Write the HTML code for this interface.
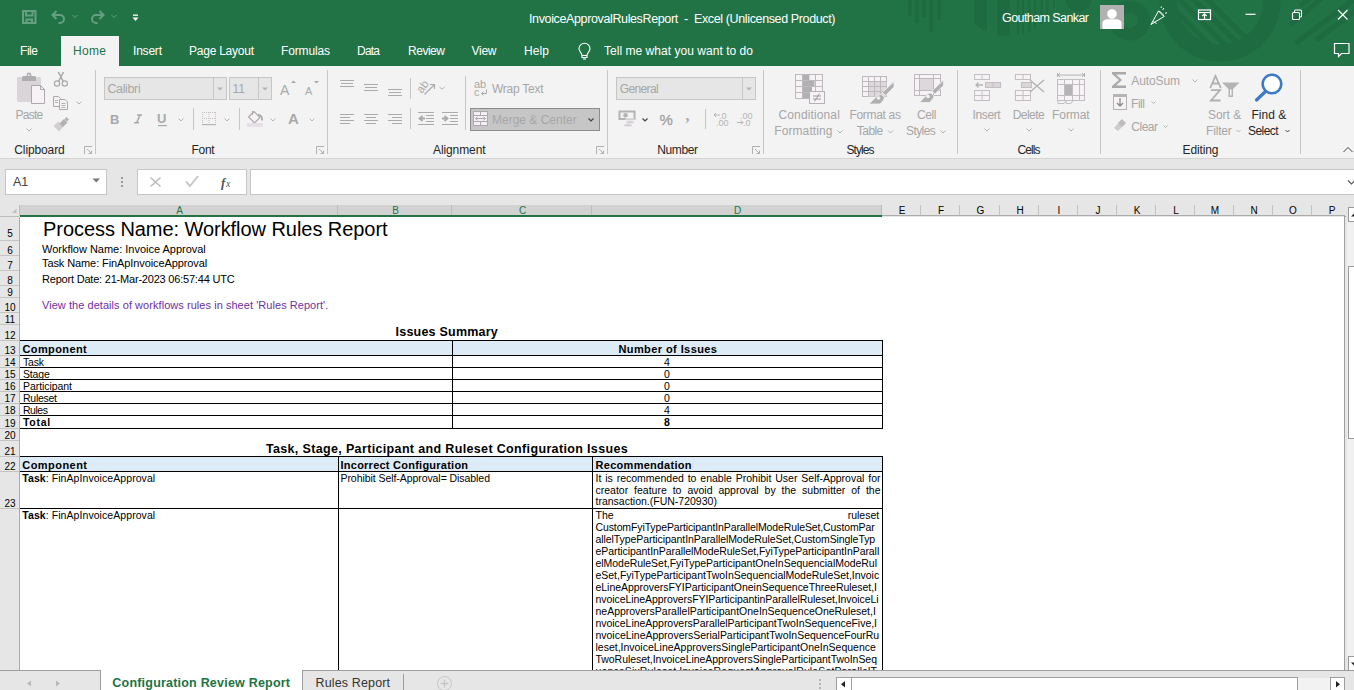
<!DOCTYPE html>
<html><head><meta charset="utf-8">
<style>
*{margin:0;padding:0;box-sizing:border-box}
html,body{width:1354px;height:690px;overflow:hidden;background:#fff;font-family:"Liberation Sans",sans-serif}
.a{position:absolute;white-space:nowrap}
#title{position:absolute;left:0;top:0;width:1354px;height:66px;background:#217346;overflow:hidden}
.tt{color:#fff;font-size:12.5px}
#ribbon{position:absolute;left:0;top:66px;width:1354px;height:93px;background:#f3f3f3;border-bottom:1px solid #d4d4d4}
.gl{color:#262626;font-size:12px}
.dis{color:#a6a6a6;font-size:12px}
.sep{position:absolute;width:1px;background:#c6c6c6}
#fbar{position:absolute;left:0;top:159px;width:1354px;height:44px;background:#e6e6e6}
#colh{position:absolute;left:0;top:203px;width:1354px;height:14px;background:#e6e6e6}
#sheet{position:absolute;left:0;top:217px;width:1354px;height:453px;background:#fff;overflow:hidden}
.colsel{top:2px;height:10px;background:#d2d2d2;border-right:1px solid #bdbdbd;color:#217346;font-size:10px;line-height:12px;text-align:center;padding-left:2px}
.colun{top:2px;height:11px;background:#e6e6e6;border-right:1px solid #c0c0c0;border-bottom:1px solid #ababab;color:#000;font-size:10px;line-height:12px;text-align:center;padding-left:2px}
#tabs{position:absolute;left:0;top:670px;width:1354px;height:20px;background:#e6e6e6}
</style></head><body>
<div id="title">
<svg class="a" style="left:0;top:0" width="1354" height="66">
 <defs><clipPath id="cc"><circle cx="1008" cy="-16" r="52"/></clipPath><clipPath id="bc"><circle cx="1220" cy="1" r="44"/></clipPath></defs>
 <g fill="#1e6a41">
  <rect x="908" y="0" width="4" height="15.5"/><rect x="915" y="0" width="3.5" height="23"/><rect x="922" y="0" width="4" height="17"/><rect x="929" y="0" width="4" height="32"/><rect x="937" y="0" width="4" height="20"/>
  <g clip-path="url(#cc)">
   <path d="M956 0l7 12.5V40h-7z"/>
   <rect x="974" y="0" width="13" height="40"/><rect x="997" y="0" width="13" height="40"/>
   <rect x="1017" y="0" width="2" height="40"/><rect x="1022" y="0" width="2" height="40"/><rect x="1028" y="0" width="2.3" height="40"/><rect x="1034" y="0" width="2" height="40"/><rect x="1040.5" y="0" width="2.3" height="40"/><rect x="1046.5" y="0" width="2" height="40"/><rect x="1053" y="0" width="2" height="40"/>
  </g>
  <circle cx="1078.5" cy="-1.5" r="13.2"/>
 </g>
 <circle cx="1130" cy="20.5" r="13.8" fill="none" stroke="#1e6a41" stroke-width="12.5"/>
 <circle cx="1220" cy="1" r="52" fill="none" stroke="#1e6a41" stroke-width="17"/>
 <g stroke="#1e6a41" stroke-width="5" clip-path="url(#bc)">
  <line x1="1160" y1="-5" x2="1215" y2="50"/><line x1="1170" y1="-10" x2="1230" y2="50"/><line x1="1180" y1="-14" x2="1244" y2="50"/><line x1="1192" y1="-16" x2="1258" y2="50"/>
 </g>
 <g stroke="#1e6a41" stroke-width="5">
  <line x1="1296" y1="43" x2="1360" y2="-5"/><line x1="1316" y1="40" x2="1362" y2="6"/><line x1="1290" y1="25" x2="1322" y2="-2"/><line x1="1300" y1="6" x2="1310" y2="-2"/>
 </g>
 <!-- save -->
 <g fill="none" stroke="#64a081" stroke-width="2">
  <path d="M23 11h12.5v12H23z"/><path d="M26 11v4.5h6.5V11"/><path d="M26.5 23v-3.5h5.5V23"/>
 </g>
 <g fill="none" stroke="#64a081" stroke-width="2">
  <path d="M52.5 15h7.5a4 4 0 0 1 0 8h-1.5"/><path d="M56.5 11l-4 4 4 4"/>
  <path d="M103.5 15h-7.5a4 4 0 0 0 0 8h1.5"/><path d="M99.5 11l4 4-4 4"/>
 </g>
 <g fill="none" stroke="#64a081" stroke-width="1"><path d="M72.5 15l2.5 2.5 2.5-2.5"/><path d="M111.5 15l2.5 2.5 2.5-2.5"/></g>
 <rect x="133" y="14.5" width="5" height="1.3" fill="#fff"/>
 <path d="M132.5 17.5h6l-3 3.5z" fill="#fff"/>
 <!-- avatar -->
 <rect x="1100" y="5" width="24" height="24" fill="#b1b1b1"/>
 <circle cx="1112" cy="14" r="4.8" fill="#fff"/>
 <path d="M1102.5 29v-5.5c0-3 2.5-4.3 5.5-4.3h8c3 0 5.5 1.3 5.5 4.3V29z" fill="#fff"/>
 <!-- celebrate -->
 <g fill="none" stroke="#fff" stroke-width="1">
  <path d="M1151 24.5l7.5-13.5 5.5 5.5z"/><path d="M1158.5 11c1.5 0 5.5 4 5.5 5.5"/><path d="M1153.5 21.5l3 2"/><path d="M1162.5 10l1.5-2M1165 13.5l2-1M1161 8l.5-1.5"/>
 </g>
 <!-- share -->
 <g fill="none" stroke="#fff" stroke-width="1.2">
  <rect x="1198.5" y="10" width="12" height="9.5"/><path d="M1198.5 12.5h12"/><path d="M1204.5 19.5v-5.5M1202.3 16l2.2-2.2 2.2 2.2"/>
 </g>
 <rect x="1245.5" y="13.7" width="10" height="1.2" fill="#fff"/>
 <g fill="none" stroke="#fff" stroke-width="1.1">
  <rect x="1292.5" y="12.5" width="7" height="7" rx="1"/><path d="M1294.5 12.5v-1.5a1 1 0 0 1 1-1h5a1 1 0 0 1 1 1v5a1 1 0 0 1-1 1h-1"/>
  <path d="M1338 10l9.5 9.5M1347.5 10l-9.5 9.5"/>
  <path d="M1334.5 43.5h14.5v10h-7.5l-3 3v-3h-4z" stroke-width="1.2"/>
 </g>
</svg>
<div class="a tt" style="left:529px;top:12px;font-size:12.5px;letter-spacing:-0.370px;">InvoiceApprovalRulesReport&nbsp; - &nbsp;Excel (Unlicensed Product)</div>
<div class="a tt" style="left:1002px;top:11px;font-size:12.5px;letter-spacing:-0.577px;">Goutham Sankar</div>
<div class="a" style="left:61px;top:36px;width:58px;height:30px;background:#f3f3f3"></div>
<div class="a tt" style="left:20px;top:44px;font-size:12px;letter-spacing:-0.448px;">File</div>
<div class="a tt" style="left:73px;top:44px;font-size:12px;color:#217346;letter-spacing:0.328px;">Home</div>
<div class="a tt" style="left:133px;top:44px;font-size:12px;letter-spacing:-0.203px;">Insert</div>
<div class="a tt" style="left:189px;top:44px;font-size:12px;letter-spacing:-0.239px;">Page Layout</div>
<div class="a tt" style="left:281px;top:44px;font-size:12px;letter-spacing:-0.145px;">Formulas</div>
<div class="a tt" style="left:357px;top:44px;font-size:12px;letter-spacing:-0.786px;">Data</div>
<div class="a tt" style="left:408px;top:44px;font-size:12px;letter-spacing:-0.472px;">Review</div>
<div class="a tt" style="left:471.6px;top:44px;font-size:12px;letter-spacing:-0.299px;">View</div>
<div class="a tt" style="left:524px;top:44px;font-size:12px;letter-spacing:0.104px;">Help</div>
<svg class="a" style="left:576px;top:41px" width="18" height="20"><g fill="none" stroke="#fff" stroke-width="1.1"><path d="M6 14.5c0-2.5-3-3.8-3-6.7a5.5 5.5 0 0 1 11 0c0 2.9-3 4.2-3 6.7z"/><path d="M6 14.5v2h5v-2"/><path d="M7 18h3"/></g></svg>
<div class="a tt" style="left:604px;top:44px;font-size:12px;letter-spacing:0.035px;">Tell me what you want to do</div>
</div>
<div id="ribbon">
<svg class="a" style="left:0;top:0" width="1354" height="92">
 <g fill="#c6c6c6">
  <rect x="95" y="4" width="1" height="84"/><rect x="327" y="4" width="1" height="84"/><rect x="607" y="4" width="1" height="84"/>
  <rect x="763" y="4" width="1" height="84"/><rect x="957" y="4" width="1" height="84"/><rect x="1100" y="4" width="1" height="84"/><rect x="1300" y="4" width="1" height="84"/>
  <rect x="193" y="42" width="1" height="22"/><rect x="239" y="42" width="1" height="22"/>
  <rect x="410" y="12" width="1" height="21"/><rect x="410" y="42" width="1" height="21"/><rect x="465" y="10" width="1" height="54"/>
  <rect x="705" y="43" width="1" height="20"/>
 </g>
 <!-- dialog launchers -->
 <g fill="none" stroke="#b0b0b0" stroke-width="1">
  <path d="M84.5 88v-7.5h7.5M87 83l4.5 4.5M91.5 84.5v3h-3"/>
  <path d="M316.5 88v-7.5h7.5M319 83l4.5 4.5M323.5 84.5v3h-3"/>
  <path d="M596.5 88v-7.5h7.5M599 83l4.5 4.5M603.5 84.5v3h-3"/>
  <path d="M752.5 88v-7.5h7.5M755 83l4.5 4.5M759.5 84.5v3h-3"/>
 </g>
 <!-- Paste -->
 <rect x="17" y="11" width="24" height="25" rx="1.5" fill="#d9d5d9"/>
 <path d="M22 15v-3.5a1.5 1.5 0 0 1 1.5-1.5h3.2v-1.2a2.3 2.3 0 0 1 4.6 0V10h3.2a1.5 1.5 0 0 1 1.5 1.5V15z" fill="#b0adb0"/><circle cx="28.8" cy="9.2" r="0.9" fill="#f3f3f3"/>
 <path d="M31.5 19.5h9l4 4v14h-13z" fill="#f6f2f6" stroke="#aca9ac"/><path d="M40.5 19.5v4h4" fill="none" stroke="#aca9ac"/>
 <!-- scissors -->
 <g fill="none" stroke="#aaa" stroke-width="1.2"><circle cx="57" cy="17.5" r="2.6"/><circle cx="64.8" cy="17.5" r="2.6"/></g>
 <path d="M58.5 15.5L63.5 6M63.3 15.5L58.3 6" stroke="#aaa" stroke-width="1.6"/>
 <!-- copy -->
 <g fill="#f6f2f6" stroke="#aaa" stroke-width="1"><path d="M53.5 30.5h5l2 2v8h-7z"/><path d="M59.5 33.5h5.5l2.5 2.5v7.5h-8z"/></g>
 <g stroke="#aaa" stroke-width="0.9"><path d="M61.5 37.5h4M61.5 39.5h4M61.5 41.5h4M55 34.5h3M55 36.5h3"/></g>
 <!-- brush -->
 <g transform="translate(0 2.5)"><path d="M53.5 57.5l5-4.5 5 5-4.5 5z" fill="#d2ced2"/><path d="M59.5 55l4.5-4.5 3.5 3.5-4.5 4.5z" fill="#b4b1b4"/><path d="M64.5 50.5l2-2 2.5 2.5-2 2z" fill="#b4b1b4"/></g>
 <g fill="none" stroke="#b4b4b4" stroke-width="1"><path d="M76.5 35.5l2.5 2.5 2.5-2.5M26.5 62.5l2.5 2.5 2.5-2.5"/></g>
 <!-- Font combos -->
 <rect x="104.5" y="11.5" width="122" height="22" fill="#e6e6e6" stroke="#c6c6c6"/><rect x="213" y="12" width="1" height="21" fill="#c6c6c6"/>
 <rect x="229.5" y="11.5" width="42" height="22" fill="#e6e6e6" stroke="#c6c6c6"/><rect x="258" y="12" width="1" height="21" fill="#c6c6c6"/>
 <path d="M217 21.5h6l-3 3z M262 21.5h6l-3 3z" fill="#b4b4b4"/>
 <rect x="616.5" y="11.5" width="139" height="22" fill="#e6e6e6" stroke="#c6c6c6"/><rect x="742" y="12" width="1" height="21" fill="#c6c6c6"/><path d="M746 21.5h6l-3 3z" fill="#b4b4b4"/>
 <!-- grow/shrink -->
 <text x="280" y="29" font-family="Liberation Sans" font-size="14" fill="#a9a9a9">A</text>
 <path d="M291 17l2.5-2.5 2.5 2.5z" fill="#a9a9a9"/>
 <text x="305" y="29" font-family="Liberation Sans" font-size="11" fill="#a9a9a9">A</text>
 <path d="M314 15h5l-2.5 2.5z" fill="#a9a9a9"/>
 <!-- B I U -->
 <text x="110" y="58" font-family="Liberation Sans" font-weight="bold" font-size="13" fill="#a9a9a9">B</text>
 <path d="M137 49h5M134 56.8h5M140 49l-3.3 7.8" fill="none" stroke="#a9a9a9" stroke-width="1.6"/>
 <text x="157" y="57" font-family="Liberation Sans" font-weight="bold" font-size="13" fill="#a9a9a9">U</text>
 <rect x="158" y="59" width="9" height="1.2" fill="#a9a9a9"/>
 <g fill="none" stroke="#b4b4b4" stroke-width="1"><path d="M178.5 52.5l2.5 2.5 2.5-2.5M224.5 52.5l2.5 2.5 2.5-2.5M270.5 52.5l2.5 2.5 2.5-2.5M309.5 52.5l2.5 2.5 2.5-2.5M439.5 21l2.5 2.2 2.5-2.2"/></g>
 <!-- borders icon -->
 <g fill="none" stroke="#c4bcc4" stroke-width="1" stroke-dasharray="1 1"><path d="M202 46.5h14M202 52.5h14M202.5 46v12M209 46v12M215.5 46v12"/></g>
 <rect x="202" y="58" width="14" height="1.2" fill="#b4b4b4"/>
 <!-- fill -->
 <path d="M248.5 51l5.5-5.5 6 6-5.5 5.5z" fill="#f6f2f6" stroke="#aaa" stroke-width="1.1"/><path d="M252.5 45v4" stroke="#aaa" stroke-width="1.1"/>
 <path d="M258 49c3 0 4.5 2 4 5.5" fill="none" stroke="#aaa" stroke-width="1.8"/>
 <rect x="247" y="57" width="16" height="4" fill="#e6dfe6"/>
 <text x="288" y="58" font-family="Liberation Sans" font-weight="bold" font-size="15" fill="#a9a9a9">A</text>
 <!-- alignment icons -->
 <g stroke="#aaa" stroke-width="1">
  <path d="M340 14.5h14M341 17.5h12M340 20.5h14"/>
  <path d="M364 18.5h14M365 21.5h12M364 24.5h14"/>
  <path d="M388 23.5h14M389 26.5h12M388 29.5h14"/>
  <path d="M340 48.5h14M340 51.5h10M340 54.5h14M340 57.5h10"/>
  <path d="M364 48.5h14M366 51.5h10M364 54.5h14M366 57.5h10"/>
  <path d="M388 48.5h14M392 51.5h10M388 54.5h14M392 57.5h10"/>
  <path d="M418 46.5h16M426 49.5h8M426 52.5h8M426 55.5h8M418 58.5h16"/>
  <path d="M442 46.5h16M450 49.5h8M450 52.5h8M450 55.5h8M442 58.5h16"/>
 </g>
 <path d="M425 52.5h-4.5M422.5 49.8l-3 2.7 3 2.7" fill="none" stroke="#aaa" stroke-width="1.8"/>
 <path d="M442 52.5h4.5M444.5 49.8l3 2.7-3 2.7" fill="none" stroke="#aaa" stroke-width="1.8"/>
 <text x="416" y="24.5" font-family="Liberation Sans" font-size="11.5" fill="#aaa" transform="rotate(-55 422.5 20.5)">ab</text>
 <path d="M424.5 28.5l9.5-9.5M430 18.5h4.5v4.5" fill="none" stroke="#aaa" stroke-width="1.2"/>
 <text x="474" y="22" font-family="Liberation Sans" font-size="11" fill="#a9a9a9">ab</text>
 <text x="474" y="29.5" font-family="Liberation Sans" font-size="11" fill="#a9a9a9">c</text>
 <path d="M486.5 23.5v4h-5M483.5 25.5l-2 2 2 2" fill="none" stroke="#a9a9a9" stroke-width="1"/>
 <!-- Merge & Center -->
 <rect x="470.5" y="42.5" width="129" height="22" fill="#c6c6c6" stroke="#8c8c8c"/>
 <rect x="473.5" y="45.5" width="14" height="14" fill="#f6eef6" stroke="#aaa"/>
 <path d="M473.5 49.5h14M473.5 55.5h14M480.5 45.5v4M480.5 55.5v4M475.5 52.5h10M477.5 50.8l-2 1.7 2 1.7M483.5 50.8l2 1.7-2 1.7" fill="none" stroke="#aaa" stroke-width="1"/>
 <path d="M588.5 52.5l2.5 2.5 2.5-2.5" fill="none" stroke="#444" stroke-width="1.2"/>
 <!-- number icons -->
 <rect x="619.5" y="45.5" width="15" height="7.5" fill="#f3f3f3" stroke="#b4b4b4" stroke-width="2"/><circle cx="625.5" cy="49.2" r="2.3" fill="#b4b4b4"/>
 <ellipse cx="630" cy="53.5" rx="4.2" ry="1.6" fill="#d4ccd4" stroke="#f3f3f3" stroke-width="0.8"/><ellipse cx="630" cy="56.3" rx="4.2" ry="1.6" fill="#d4ccd4" stroke="#f3f3f3" stroke-width="0.8"/><ellipse cx="628" cy="59.2" rx="4.2" ry="1.6" fill="#d4ccd4" stroke="#f3f3f3" stroke-width="0.8"/>
 <path d="M642.5 52.5l2.5 2.5 2.5-2.5" fill="none" stroke="#444" stroke-width="1.2"/>
 <text x="659.5" y="59" font-family="Liberation Sans" font-size="15" fill="#a0a0a0" stroke="#a0a0a0" stroke-width="0.3">%</text>
 <text x="685.5" y="55" font-family="Liberation Serif" font-weight="bold" font-size="16" fill="#a9a9a9">,</text>
 <text x="719" y="53" font-family="Liberation Sans" font-size="9" fill="#b4b4b4">.0</text>
 <text x="716" y="60" font-family="Liberation Sans" font-size="9" fill="#b4b4b4">.00</text>
 <path d="M720 49h-6M716 47l-2 2 2 2" fill="none" stroke="#b4b4b4" stroke-width="1"/>
 <text x="740" y="53" font-family="Liberation Sans" font-size="9" fill="#b4b4b4">.00</text>
 <text x="743" y="60" font-family="Liberation Sans" font-size="9" fill="#b4b4b4">.0</text>
 <path d="M737 56.5h6M741 54.5l2 2-2 2" fill="none" stroke="#b4b4b4" stroke-width="1"/>
 <g fill="none" stroke="#b4b4b4" stroke-width="1"><path d="M837.5 64.5l2.5 2.5 2.5-2.5M888 64.5l2.5 2.5 2.5-2.5M940.5 64.5l2.5 2.5 2.5-2.5"/></g>
 <!-- conditional formatting -->
 <rect x="795.5" y="8.5" width="27" height="24" fill="#f6f2f6" stroke="#bdb9bd"/>
 <path d="M795.5 14.5h27M795.5 20.5h27M795.5 26.5h27M802.5 8.5v24M809 8.5v24M815.5 8.5v24" fill="none" stroke="#bdb9bd"/>
 <rect x="803" y="9" width="6" height="5" fill="#b0b0b0"/><rect x="803" y="15" width="11.5" height="5" fill="#b0b0b0"/><rect x="803" y="21" width="9" height="5" fill="#b0b0b0"/><rect x="803" y="27" width="6" height="5" fill="#b0b0b0"/>
 <rect x="809.5" y="25.5" width="15" height="12" fill="#f6f2f6" stroke="#b4b0b4"/>
 <path d="M813 30h8M813 33h8M819.5 27.5l-5 8" fill="none" stroke="#999" stroke-width="1"/>
 <!-- format as table -->
 <rect x="862.5" y="10.5" width="24" height="20" fill="#f6f2f6" stroke="#bdb9bd"/>
 <rect x="869" y="16" width="17.5" height="14.5" fill="#dcd8dc"/>
 <path d="M862.5 15.5h24M862.5 20.5h24M862.5 25.5h24M868.5 10.5v20M874.5 10.5v20M880.5 10.5v20" fill="none" stroke="#bdb9bd"/>
 <path d="M894 15.5v5.5l-8.5 8.5-3-3z" fill="#b0b0b0" stroke="#f3f3f3" stroke-width="0.8"/>
 <path d="M881.5 28.5l3 3c-.5 2-1.5 3.5-3 5l-1.5 1.5h-11l7-7c1.5-1.5 3.5-2.5 5.5-2.5z" fill="#b0b0b0" stroke="#f3f3f3" stroke-width="0.8"/>
 <circle cx="878.5" cy="32" r="1.8" fill="#f3f3f3"/>
 <!-- cell styles -->
 <rect x="914.5" y="8.5" width="26" height="21" fill="#f6f2f6" stroke="#bdb9bd"/>
 <rect x="920" y="13" width="13.5" height="11" fill="#dcd8dc"/>
 <path d="M914.5 12.5h26M914.5 24.5h26M919.5 8.5v21M933.5 8.5v21" fill="none" stroke="#bdb9bd"/>
 <path d="M943.5 14v5.5l-8.5 8.5-3-3z" fill="#b0b0b0" stroke="#f3f3f3" stroke-width="0.8"/>
 <path d="M931 27l3 3c-.5 2-1.5 3.5-3 5l-1.5 1.5h-10l6.5-7c1.5-1.5 3-2.5 5-2.5z" fill="#b0b0b0" stroke="#f3f3f3" stroke-width="0.8"/>
 <circle cx="928" cy="30.5" r="1.8" fill="#f3f3f3"/>
 <!-- insert -->
 <g fill="#f6f2f6" stroke="#c2bfc2" stroke-width="1">
  <rect x="974.5" y="8.5" width="15" height="5"/><path d="M982 8.5v5"/>
  <rect x="985.5" y="16.5" width="15" height="5" fill="#d9d5d9"/><path d="M993 16.5v5"/>
  <rect x="974.5" y="24.5" width="15" height="10"/><path d="M974.5 29.5h15M982 24.5v10"/>
 </g>
 <path d="M983 19h-7M978.5 16.5L976 19l2.5 2.5" fill="none" stroke="#b4b4b4" stroke-width="1.3"/>
 <!-- delete -->
 <g fill="#f6f2f6" stroke="#c2bfc2" stroke-width="1">
  <rect x="1015.5" y="8.5" width="15" height="5"/><path d="M1023 8.5v5"/>
  <rect x="1021.5" y="16.5" width="10" height="5" fill="#d9d5d9"/>
  <rect x="1015.5" y="24.5" width="15" height="10"/><path d="M1015.5 29.5h15M1023 24.5v10"/>
 </g>
 <path d="M1030 14l14 12M1044 14l-14 12" fill="none" stroke="#b4b4b4" stroke-width="1.5"/>
 <!-- format -->
 <path d="M1057.5 7v4M1084.5 7v4M1058 9h26M1060 7l-2 2 2 2M1082 7l2 2-2 2" fill="none" stroke="#b4b4b4" stroke-width="1"/>
 <rect x="1057.5" y="13.5" width="27" height="21" fill="#f6f2f6" stroke="#c2bfc2"/>
 <path d="M1057.5 18.5h27M1057.5 29.5h27M1064.5 13.5v21M1072.5 13.5v21M1079.5 13.5v21" fill="none" stroke="#c2bfc2"/>
 <rect x="1065" y="19" width="7" height="10" fill="#b4b4b4"/>
 <path d="M1058 34.5v3h6l2-3M1066 34.5v3h5l2-3" fill="none" stroke="#c2bfc2"/>
 <g fill="none" stroke="#b4b4b4" stroke-width="1"><path d="M984.5 62.5l2.5 2.5 2.5-2.5M1026.5 62.5l2.5 2.5 2.5-2.5M1068.5 62.5l2.5 2.5 2.5-2.5"/></g>
 <!-- editing -->
 <path d="M1112 6h14v2.5h-10l6 5.5-6 5.5h10v2.5h-14v-2l7-6-7-6z" fill="#a9a9a9"/>
 <rect x="1113.5" y="28.5" width="13" height="15" fill="#f6f2f6" stroke="#b4b4b4"/><rect x="1113" y="28" width="14" height="3" fill="#b4b4b4"/>
 <path d="M1120 32v8M1117 37l3 3 3-3" fill="none" stroke="#8c8c8c" stroke-width="1.3"/>
 <path d="M1114 62l7-8 4 4-7 7z" fill="#cfcbcf"/><path d="M1118 57l4-4 4 4-4 4z" fill="#bdbdbd"/>
 <g fill="none" stroke="#b4b4b4" stroke-width="1"><path d="M1192.5 13.5l2.5 2.5 2.5-2.5M1151.5 35.5l2 2 2-2M1163.5 59.5l2 2 2-2M1261.5 64l2 2 2-2"/></g>
 <path d="M1210.2 22L1215.5 10l5.3 12M1212 17.5h7" fill="none" stroke="#b0b0b0" stroke-width="1.8"/>
 <path d="M1211 24.2h9l-9 10.3h9.5" fill="none" stroke="#b0b0b0" stroke-width="1.8"/>
 <path d="M1222 16.5h17.5l-6.5 6.5v8h-4.5v-8z" fill="#b4b4b4"/><rect x="1230" y="23.5" width="1.6" height="6" fill="#f3f3f3"/><path d="M1226 20h10l-3 4v7h-2v-7z" fill="#f3f3f3" opacity="0"/>
 <circle cx="1272" cy="18" r="9.3" fill="#fff" stroke="#3c7bc4" stroke-width="2.6"/>
 <path d="M1265.5 25.5l-9 8.5" stroke="#3c7bc4" stroke-width="3.2" stroke-linecap="round"/>
 <path d="M1343.5 86l4.5-4.5 4.5 4.5" fill="none" stroke="#444" stroke-width="1"/><path d="M1236.5 64l2 2 2-2" fill="none" stroke="#b4b4b4" stroke-width="1"/>
 <path d="M1285.5 64l2 2 2-2" fill="none" stroke="#444" stroke-width="1"/>
</svg>
<div class="a dis" style="left:15.4px;top:42.84px;font-size:12px;line-height:12px;letter-spacing:-0.697px;">Paste</div>
<div class="a gl" style="left:14.3px;top:77.84px;font-size:12px;line-height:12px;letter-spacing:-0.122px;">Clipboard</div>
<div class="a dis" style="left:107.4px;top:16.92px;font-size:12.5px;line-height:12.5px;letter-spacing:-0.356px;">Calibri</div>
<div class="a dis" style="left:232.4px;top:16.92px;font-size:12px;line-height:12px;">11</div>
<div class="a gl" style="left:191.6px;top:77.84px;font-size:12px;line-height:12px;letter-spacing:-0.339px;">Font</div>
<div class="a dis" style="left:492px;top:17.34px;font-size:12px;line-height:12px;letter-spacing:-0.260px;">Wrap Text</div>
<div class="a dis" style="left:492px;top:47.84px;font-size:12px;line-height:12px;letter-spacing:-0.000px;">Merge &amp; Center</div>
<div class="a gl" style="left:433px;top:77.84px;font-size:12px;line-height:12px;letter-spacing:-0.097px;">Alignment</div>
<div class="a dis" style="left:619.8px;top:17.34px;font-size:12px;line-height:12px;letter-spacing:-0.651px;">General</div>
<div class="a gl" style="left:657.2px;top:77.84px;font-size:12px;line-height:12px;letter-spacing:-0.378px;">Number</div>
<div class="a dis" style="left:778.5px;top:43.04px;font-size:12px;line-height:12px;letter-spacing:0.125px;">Conditional</div>
<div class="a dis" style="left:774.3px;top:58.74px;font-size:12px;line-height:12px;letter-spacing:0.082px;">Formatting</div>
<div class="a dis" style="left:849.4px;top:43.04px;font-size:12px;line-height:12px;letter-spacing:-0.302px;">Format as</div>
<div class="a dis" style="left:856.8px;top:58.74px;font-size:12px;line-height:12px;letter-spacing:-0.547px;">Table</div>
<div class="a dis" style="left:917px;top:43.04px;font-size:12px;line-height:12px;letter-spacing:-0.391px;">Cell</div>
<div class="a dis" style="left:906px;top:58.74px;font-size:12px;line-height:12px;letter-spacing:-0.577px;">Styles</div>
<div class="a gl" style="left:846.4px;top:77.84px;font-size:12px;line-height:12px;letter-spacing:-0.917px;">Styles</div>
<div class="a dis" style="left:972.5px;top:42.94px;font-size:12px;line-height:12px;letter-spacing:-0.363px;">Insert</div>
<div class="a dis" style="left:1012.7px;top:42.94px;font-size:12px;line-height:12px;letter-spacing:-0.537px;">Delete</div>
<div class="a dis" style="left:1052px;top:42.94px;font-size:12px;line-height:12px;letter-spacing:-0.063px;">Format</div>
<div class="a gl" style="left:1017.5px;top:77.84px;font-size:12px;line-height:12px;letter-spacing:-0.893px;">Cells</div>
<div class="a dis" style="left:1131.3px;top:9.34px;font-size:12px;line-height:12px;letter-spacing:-0.110px;">AutoSum</div>
<div class="a dis" style="left:1131px;top:31.64px;font-size:12px;line-height:12px;letter-spacing:-0.443px;">Fill</div>
<div class="a dis" style="left:1131.3px;top:55.14px;font-size:12px;line-height:12px;letter-spacing:-0.497px;">Clear</div>
<div class="a dis" style="left:1207.9px;top:43.14px;font-size:12px;line-height:12px;letter-spacing:0.008px;">Sort &amp;</div>
<div class="a dis" style="left:1206px;top:58.84px;font-size:12px;line-height:12px;letter-spacing:-0.174px;">Filter</div>
<div class="a gl" style="left:1251.5px;top:43.14px;font-size:12px;line-height:12px;letter-spacing:0.022px;">Find &amp;</div>
<div class="a gl" style="left:1248px;top:58.84px;font-size:12px;line-height:12px;letter-spacing:-0.552px;">Select</div>
<div class="a gl" style="left:1182.6px;top:77.84px;font-size:12px;line-height:12px;letter-spacing:-0.151px;">Editing</div>
</div>
<div id="fbar">
<div class="a" style="left:5px;top:10px;width:102px;height:26px;background:#fff;border:1px solid #c6c6c6"></div>
<div class="a" style="left:13px;top:16px;font-size:12.5px;color:#444">A1</div>
<svg class="a" style="left:0;top:-1px" width="1354" height="45">
 <path d="M92.5 20.5h7.5l-3.75 4z" fill="#777"/>
 <g fill="#9a9a9a"><rect x="121" y="19" width="2" height="2"/><rect x="121" y="23" width="2" height="2"/><rect x="121" y="27" width="2" height="2"/></g>
 <rect x="137.5" y="11.5" width="109" height="25" fill="#fff" stroke="#c6c6c6"/>
 <path d="M150.5 19.5l10 9M160.5 19.5l-10 9" stroke="#b8b8b8" stroke-width="1.4"/>
 <path d="M186 23.5l4 4.5 8-10" fill="none" stroke="#c8c8c8" stroke-width="2"/>
 <text x="221" y="29" font-family="Liberation Serif" font-style="italic" font-weight="bold" font-size="13" fill="#555">f</text>
 <text x="226" y="29" font-family="Liberation Serif" font-style="italic" font-size="10" fill="#555">x</text>
 <rect x="250.5" y="11.5" width="1110" height="25" fill="#fff" stroke="#c6c6c6"/>
 <path d="M1348 22.5l3.5 3.5 3.5-3.5" fill="none" stroke="#555" stroke-width="1.2"/>
</svg>
</div>
<div id="colh">
<div class="a" style="left:0;top:2px;width:19px;height:11px;background:#e6e6e6"></div><svg class="a" style="left:0;top:0" width="20" height="13"><path d="M16.5 10h-4.5l4.5-4.5z" fill="#c0c0c0"/></svg><div class="a" style="left:19px;top:2px;width:1px;height:11px;background:#bdbdbd"></div><div class="a" style="left:0;top:13px;width:19px;height:1px;background:#bdbdbd"></div><div class="a colsel" style="left:20px;width:318px">A</div><div class="a colsel" style="left:338px;width:114px">B</div><div class="a colsel" style="left:452px;width:140px">C</div><div class="a colsel" style="left:592px;width:290px">D</div><div class="a colun" style="left:882px;width:39px">E</div><div class="a colun" style="left:921px;width:39px">F</div><div class="a colun" style="left:960px;width:40px">G</div><div class="a colun" style="left:1000px;width:39px">H</div><div class="a colun" style="left:1039px;width:39px">I</div><div class="a colun" style="left:1078px;width:39px">J</div><div class="a colun" style="left:1117px;width:39px">K</div><div class="a colun" style="left:1156px;width:39px">L</div><div class="a colun" style="left:1195px;width:39px">M</div><div class="a colun" style="left:1234px;width:39px">N</div><div class="a colun" style="left:1273px;width:39px">O</div><div class="a colun" style="left:1312px;width:39px">P</div><div class="a" style="left:20px;top:12px;width:862px;height:2px;background:#217346"></div><div class="a" style="left:1345px;top:0;width:9px;height:14px;background:#e6e6e6"></div><div class="a" style="left:1344px;top:13px;width:2px;height:1px;background:#a0a0a0"></div>
</div>
<div id="sheet">
<div class="a" style="left:0px;top:0px;width:19px;height:453px;background:#e6e6e6"></div>
<div class="a" style="left:19px;top:0px;width:1px;height:453px;background:#ababab"></div>
<div class="a" style="left:0px;top:23px;width:19px;height:1px;background:#c4c4c4"></div>
<div class="a" style="left:0.5px;top:12.13px;font-size:10px;line-height:10px;width:19px;text-align:center;color:#000;">5</div>
<div class="a" style="left:0px;top:38px;width:19px;height:1px;background:#c4c4c4"></div>
<div class="a" style="left:0.5px;top:28.63px;font-size:10px;line-height:10px;width:19px;text-align:center;color:#000;">6</div>
<div class="a" style="left:0px;top:53px;width:19px;height:1px;background:#c4c4c4"></div>
<div class="a" style="left:0.5px;top:43.64px;font-size:10px;line-height:10px;width:19px;text-align:center;color:#000;">7</div>
<div class="a" style="left:0px;top:68px;width:19px;height:1px;background:#c4c4c4"></div>
<div class="a" style="left:0.5px;top:58.64px;font-size:10px;line-height:10px;width:19px;text-align:center;color:#000;">8</div>
<div class="a" style="left:0px;top:80px;width:19px;height:1px;background:#c4c4c4"></div>
<div class="a" style="left:0.5px;top:70.64px;font-size:10px;line-height:10px;width:19px;text-align:center;color:#000;">9</div>
<div class="a" style="left:0px;top:95px;width:19px;height:1px;background:#c4c4c4"></div>
<div class="a" style="left:0.5px;top:85.64px;font-size:10px;line-height:10px;width:19px;text-align:center;color:#000;">10</div>
<div class="a" style="left:0px;top:107px;width:19px;height:1px;background:#c4c4c4"></div>
<div class="a" style="left:0.5px;top:97.64px;font-size:10px;line-height:10px;width:19px;text-align:center;color:#000;">11</div>
<div class="a" style="left:0px;top:123px;width:19px;height:1px;background:#c4c4c4"></div>
<div class="a" style="left:0.5px;top:113.64px;font-size:10px;line-height:10px;width:19px;text-align:center;color:#000;">12</div>
<div class="a" style="left:0px;top:138px;width:19px;height:1px;background:#c4c4c4"></div>
<div class="a" style="left:0.5px;top:128.64px;font-size:10px;line-height:10px;width:19px;text-align:center;color:#000;">13</div>
<div class="a" style="left:0px;top:150px;width:19px;height:1px;background:#c4c4c4"></div>
<div class="a" style="left:0.5px;top:140.64px;font-size:10px;line-height:10px;width:19px;text-align:center;color:#000;">14</div>
<div class="a" style="left:0px;top:162px;width:19px;height:1px;background:#c4c4c4"></div>
<div class="a" style="left:0.5px;top:152.64px;font-size:10px;line-height:10px;width:19px;text-align:center;color:#000;">15</div>
<div class="a" style="left:0px;top:174px;width:19px;height:1px;background:#c4c4c4"></div>
<div class="a" style="left:0.5px;top:164.64px;font-size:10px;line-height:10px;width:19px;text-align:center;color:#000;">16</div>
<div class="a" style="left:0px;top:186px;width:19px;height:1px;background:#c4c4c4"></div>
<div class="a" style="left:0.5px;top:176.64px;font-size:10px;line-height:10px;width:19px;text-align:center;color:#000;">17</div>
<div class="a" style="left:0px;top:198px;width:19px;height:1px;background:#c4c4c4"></div>
<div class="a" style="left:0.5px;top:188.64px;font-size:10px;line-height:10px;width:19px;text-align:center;color:#000;">18</div>
<div class="a" style="left:0px;top:211px;width:19px;height:1px;background:#c4c4c4"></div>
<div class="a" style="left:0.5px;top:201.64px;font-size:10px;line-height:10px;width:19px;text-align:center;color:#000;">19</div>
<div class="a" style="left:0px;top:223px;width:19px;height:1px;background:#c4c4c4"></div>
<div class="a" style="left:0.5px;top:213.64px;font-size:10px;line-height:10px;width:19px;text-align:center;color:#000;">20</div>
<div class="a" style="left:0px;top:239px;width:19px;height:1px;background:#c4c4c4"></div>
<div class="a" style="left:0.5px;top:229.64px;font-size:10px;line-height:10px;width:19px;text-align:center;color:#000;">21</div>
<div class="a" style="left:0px;top:254px;width:19px;height:1px;background:#c4c4c4"></div>
<div class="a" style="left:0.5px;top:244.64px;font-size:10px;line-height:10px;width:19px;text-align:center;color:#000;">22</div>
<div class="a" style="left:0px;top:291px;width:19px;height:1px;background:#c4c4c4"></div>
<div class="a" style="left:0.5px;top:281.64px;font-size:10px;line-height:10px;width:19px;text-align:center;color:#000;">23</div>
<div class="a" style="left:1344px;top:0px;width:1px;height:453px;background:#a0a0a0"></div>
<div class="a" style="left:1345px;top:0px;width:9px;height:453px;background:#e6e6e6"></div>
<div class="a" style="left:1347px;top:5px;width:7px;height:434px;background:#f0f0f0"></div>
<div class="a" style="left:43px;top:1.77px;font-size:20px;line-height:20px;color:#000;letter-spacing:-0.053px;">Process Name: Workflow Rules Report</div>
<div class="a" style="left:42px;top:26.79px;font-size:11px;line-height:11px;color:#000;letter-spacing:-0.016px;">Workflow Name: Invoice Approval</div>
<div class="a" style="left:42px;top:41.39px;font-size:11px;line-height:11px;color:#000;letter-spacing:-0.098px;">Task Name: FinApInvoiceApproval</div>
<div class="a" style="left:42px;top:56.69px;font-size:11px;line-height:11px;color:#000;letter-spacing:-0.204px;">Report Date: 21-Mar-2023 06:57:44 UTC</div>
<div class="a" style="left:42px;top:83.19px;font-size:11px;line-height:11px;color:#7030a0;letter-spacing:0.049px;">View the details of workflows rules in sheet &#39;Rules Report&#39;.</div>
<div class="a" style="left:395.5px;top:109.02px;font-size:12.5px;line-height:12.5px;font-weight:bold;color:#000;letter-spacing:0.226px;">Issues Summary</div>
<div class="a" style="left:20px;top:124px;width:862px;height:14px;background:#ddebf7"></div>
<div class="a" style="left:20px;top:123px;width:863px;height:1px;background:#000"></div>
<div class="a" style="left:20px;top:138px;width:863px;height:1px;background:#000"></div>
<div class="a" style="left:20px;top:150px;width:863px;height:1px;background:#000"></div>
<div class="a" style="left:20px;top:162px;width:863px;height:1px;background:#000"></div>
<div class="a" style="left:20px;top:174px;width:863px;height:1px;background:#000"></div>
<div class="a" style="left:20px;top:186px;width:863px;height:1px;background:#000"></div>
<div class="a" style="left:20px;top:198px;width:863px;height:1px;background:#000"></div>
<div class="a" style="left:20px;top:211px;width:863px;height:1px;background:#000"></div>
<div class="a" style="left:452px;top:123px;width:1px;height:89px;background:#000"></div>
<div class="a" style="left:882px;top:123px;width:1px;height:89px;background:#000"></div>
<div class="a" style="left:22.5px;top:127.19px;font-size:11px;line-height:11px;font-weight:bold;color:#000;letter-spacing:0.386px;">Component</div>
<div class="a" style="left:618.4px;top:127.19px;font-size:11px;line-height:11px;font-weight:bold;color:#000;letter-spacing:0.419px;">Number of Issues</div>
<div class="a" style="left:23px;top:139.51px;font-size:10.5px;line-height:10.5px;color:#000;letter-spacing:-0.198px;">Task</div>
<div class="a" style="left:452px;top:139.51px;font-size:10.5px;line-height:10.5px;width:430px;text-align:center;color:#000;">4</div>
<div class="a" style="left:23px;top:151.51px;font-size:10.5px;line-height:10.5px;color:#000;letter-spacing:-0.163px;">Stage</div>
<div class="a" style="left:452px;top:151.51px;font-size:10.5px;line-height:10.5px;width:430px;text-align:center;color:#000;">0</div>
<div class="a" style="left:23px;top:163.51px;font-size:10.5px;line-height:10.5px;color:#000;letter-spacing:-0.061px;">Participant</div>
<div class="a" style="left:452px;top:163.51px;font-size:10.5px;line-height:10.5px;width:430px;text-align:center;color:#000;">0</div>
<div class="a" style="left:23px;top:175.51px;font-size:10.5px;line-height:10.5px;color:#000;letter-spacing:-0.268px;">Ruleset</div>
<div class="a" style="left:452px;top:175.51px;font-size:10.5px;line-height:10.5px;width:430px;text-align:center;color:#000;">0</div>
<div class="a" style="left:23px;top:187.51px;font-size:10.5px;line-height:10.5px;color:#000;letter-spacing:-0.465px;">Rules</div>
<div class="a" style="left:452px;top:187.51px;font-size:10.5px;line-height:10.5px;width:430px;text-align:center;color:#000;">4</div>
<div class="a" style="left:23px;top:199.71px;font-size:10.5px;line-height:10.5px;font-weight:bold;color:#000;letter-spacing:0.722px;">Total</div>
<div class="a" style="left:452px;top:199.71px;font-size:10.5px;line-height:10.5px;width:430px;text-align:center;font-weight:bold;color:#000;">8</div>
<div class="a" style="left:265.9px;top:225.72px;font-size:12.5px;line-height:12.5px;font-weight:bold;color:#000;letter-spacing:0.350px;">Task, Stage, Participant and Ruleset Configuration Issues</div>
<div class="a" style="left:20px;top:240px;width:862px;height:14px;background:#ddebf7"></div>
<div class="a" style="left:20px;top:239px;width:863px;height:1px;background:#000"></div>
<div class="a" style="left:20px;top:254px;width:863px;height:1px;background:#000"></div>
<div class="a" style="left:20px;top:291px;width:863px;height:1px;background:#000"></div>
<div class="a" style="left:338px;top:239px;width:1px;height:214px;background:#000"></div>
<div class="a" style="left:592px;top:239px;width:1px;height:214px;background:#000"></div>
<div class="a" style="left:882px;top:239px;width:1px;height:214px;background:#000"></div>
<div class="a" style="left:22.3px;top:242.99px;font-size:11px;line-height:11px;font-weight:bold;color:#000;letter-spacing:0.449px;">Component</div>
<div class="a" style="left:340.5px;top:242.99px;font-size:11px;line-height:11px;font-weight:bold;color:#000;letter-spacing:0.244px;">Incorrect Configuration</div>
<div class="a" style="left:595.6px;top:242.99px;font-size:11px;line-height:11px;font-weight:bold;color:#000;letter-spacing:0.277px;">Recommendation</div>
<div class="a" style="left:22.3px;top:255.81px;font-size:10.5px;line-height:10.5px;color:#000;letter-spacing:0.070px;"><b>Task</b>: FinApInvoiceApproval</div>
<div class="a" style="left:340.5px;top:255.81px;font-size:10.5px;line-height:10.5px;color:#000;letter-spacing:-0.064px;">Prohibit Self-Approval= Disabled</div>
<div class="a" style="left:22.3px;top:292.51px;font-size:10.5px;line-height:10.5px;color:#000;letter-spacing:0.070px;"><b>Task</b>: FinApInvoiceApproval</div>
<div class="a" style="left:595.5px;top:255.81px;font-size:10.5px;line-height:10.5px;color:#000;width:285px;text-align:justify;text-align-last:justify;">It is recommended to enable Prohibit User Self-Approval for</div>
<div class="a" style="left:595.5px;top:267.51px;font-size:10.5px;line-height:10.5px;color:#000;width:285px;text-align:justify;text-align-last:justify;">creator feature to avoid approval by the submitter of the</div>
<div class="a" style="left:595.5px;top:279.11px;font-size:10.5px;line-height:10.5px;color:#000;letter-spacing:0.000px;">transaction.(FUN-720930)</div>
<div class="a" style="left:595.5px;top:292.51px;font-size:10.5px;line-height:10.5px;color:#000;width:283.7px;text-align:justify;text-align-last:justify;">The ruleset</div>
<div class="a" style="left:595.5px;top:304.51px;font-size:10.5px;line-height:10.5px;color:#000;letter-spacing:-0.114px;">CustomFyiTypeParticipantInParallelModeRuleSet,CustomPar</div>
<div class="a" style="left:595.5px;top:316.51px;font-size:10.5px;line-height:10.5px;color:#000;letter-spacing:-0.071px;">allelTypeParticipantInParallelModeRuleSet,CustomSingleTyp</div>
<div class="a" style="left:595.5px;top:328.51px;font-size:10.5px;line-height:10.5px;color:#000;letter-spacing:-0.068px;">eParticipantInParallelModeRuleSet,FyiTypeParticipantInParall</div>
<div class="a" style="left:595.5px;top:340.51px;font-size:10.5px;line-height:10.5px;color:#000;letter-spacing:-0.041px;">elModeRuleSet,FyiTypeParticipantOneInSequencialModeRul</div>
<div class="a" style="left:595.5px;top:352.51px;font-size:10.5px;line-height:10.5px;color:#000;letter-spacing:-0.021px;">eSet,FyiTypeParticipantTwoInSequencialModeRuleSet,Invoic</div>
<div class="a" style="left:595.5px;top:364.51px;font-size:10.5px;line-height:10.5px;color:#000;letter-spacing:-0.040px;">eLineApproversFYIParticipantOneinSequenceThreeRuleset,I</div>
<div class="a" style="left:595.5px;top:376.51px;font-size:10.5px;line-height:10.5px;color:#000;letter-spacing:-0.070px;">nvoiceLineApproversFYIParticipantinParallelRuleset,InvoiceLi</div>
<div class="a" style="left:595.5px;top:388.51px;font-size:10.5px;line-height:10.5px;color:#000;letter-spacing:-0.019px;">neApproversParallelParticipantOneInSequenceOneRuleset,I</div>
<div class="a" style="left:595.5px;top:400.51px;font-size:10.5px;line-height:10.5px;color:#000;letter-spacing:-0.039px;">nvoiceLineApproversParallelParticipantTwoInSequenceFive,I</div>
<div class="a" style="left:595.5px;top:412.51px;font-size:10.5px;line-height:10.5px;color:#000;letter-spacing:-0.021px;">nvoiceLineApproversSerialParticipantTwoInSequenceFourRu</div>
<div class="a" style="left:595.5px;top:424.51px;font-size:10.5px;line-height:10.5px;color:#000;letter-spacing:-0.008px;">leset,InvoiceLineApproversSingleParticipantOneInSequence</div>
<div class="a" style="left:595.5px;top:436.51px;font-size:10.5px;line-height:10.5px;color:#000;letter-spacing:-0.050px;">TwoRuleset,InvoiceLineApproversSingleParticipantTwoInSeq</div>
<div class="a" style="left:595.5px;top:448.51px;font-size:10.5px;line-height:10.5px;color:#000;letter-spacing:0.135px;">uenceSixRuleset,InvoiceRequestApprovalRuleSetParallelT</div>
<div class="a" style="left:0px;top:453px;width:1354px;height:1px;background:#a0a0a0"></div>
</div>
<div id="tabs">
<div class="a" style="left:0;top:0;width:1354px;height:1px;background:#9e9e9e"></div>
<div class="a" style="left:100px;top:0;width:203px;height:20px;background:#fff;border-left:1px solid #9e9e9e;border-right:1px solid #9e9e9e"></div>
<div class="a" style="left:112.3px;top:6px;font-size:12.5px;line-height:14px;font-weight:bold;color:#217346;letter-spacing:0.210px;">Configuration Review Report</div>
<div class="a" style="left:315.5px;top:6px;font-size:12.5px;line-height:14px;color:#333;letter-spacing:0.141px;">Rules Report</div>
<div class="a" style="left:403px;top:4px;width:1px;height:16px;background:#9e9e9e"></div>
<svg class="a" style="left:0;top:0" width="1354" height="20">
 <path d="M31 10.5l-4 3 4 3z M56 10.5l4 3-4 3z" fill="#b8b8b8"/>
 <circle cx="444.5" cy="13.5" r="7" fill="none" stroke="#c6c6c6" stroke-width="1"/>
 <path d="M444.5 9.5v8M440.5 13.5h8" stroke="#c6c6c6" stroke-width="1.3"/>
 <g fill="#b4b4b4"><rect x="819" y="9" width="2" height="2"/><rect x="819" y="13" width="2" height="2"/><rect x="819" y="17" width="2" height="2"/></g>
 <rect x="837" y="8" width="507" height="13" fill="#f2f2f2"/>
 <rect x="836.5" y="7.5" width="15" height="14" fill="#fff" stroke="#9e9e9e"/>
 <rect x="851.5" y="7.5" width="446" height="14" fill="#fff" stroke="#9e9e9e"/>
 <rect x="1330.5" y="7.5" width="14" height="14" fill="#fff" stroke="#9e9e9e"/>
 <path d="M845 11l-4 3.3 4 3.3z M1336 11l4 3.3-4 3.3z" fill="#222"/>
</svg>
</div>
<div class="a" id="vscroll" style="left:0;top:0;width:0;height:0">
<div class="a" style="left:1348px;top:207px;width:10px;height:15px;background:#fff;border:1px solid #9a9a9a"></div>
<svg class="a" style="left:1349px;top:208px" width="8" height="13"><path d="M2 8.5l3-3 3 3z" fill="#222"/></svg>
<div class="a" style="left:1348px;top:266px;width:10px;height:173px;background:#fff;border:1px solid #9a9a9a"></div>
<div class="a" style="left:1348px;top:656px;width:10px;height:15px;background:#fff;border:1px solid #9a9a9a"></div>
<svg class="a" style="left:1349px;top:657px" width="8" height="13"><path d="M2 5.5l3 3 3-3z" fill="#222"/></svg>
</div>
</body></html>
